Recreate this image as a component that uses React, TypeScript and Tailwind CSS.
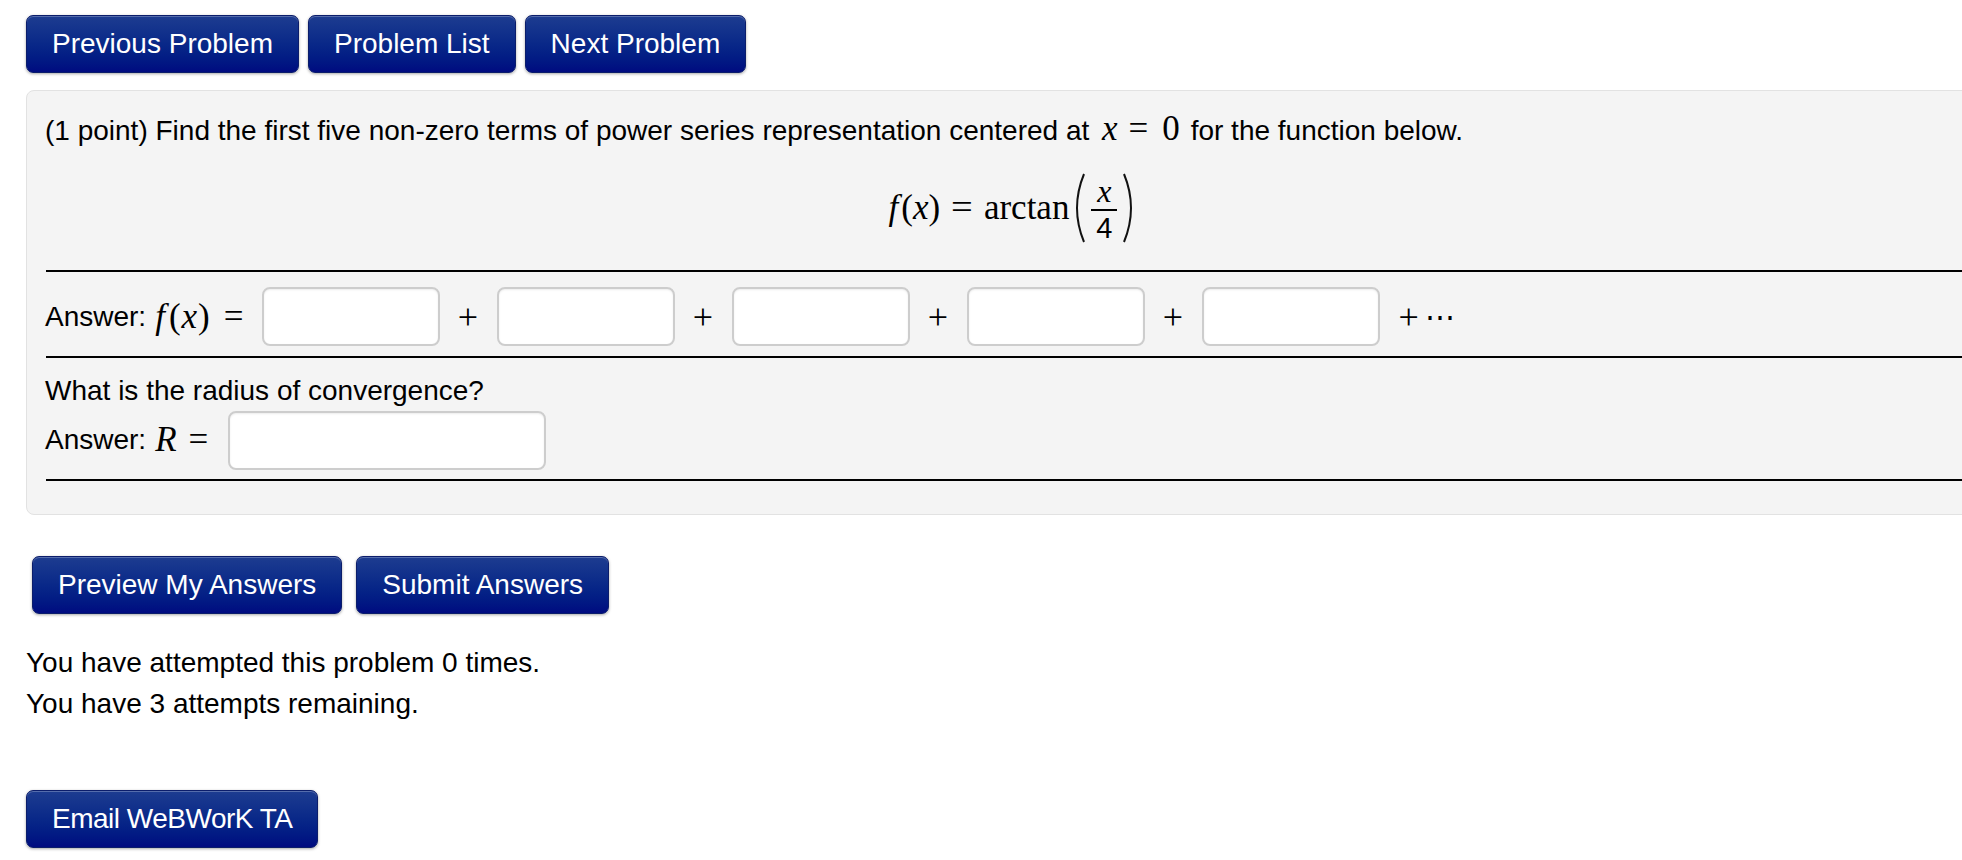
import React from 'react';

const btn =
  'h-[58px] px-[25px] rounded-[7px] border border-[#0b1d6b] bg-linear-to-b from-[#1d3c90] to-[#000a80] text-white text-[28px] leading-[40px] shadow-[inset_0_1px_0_rgba(255,255,255,0.25),0_1px_3px_rgba(0,0,0,0.35)] whitespace-nowrap';

const input =
  'h-[59px] bg-white border-2 border-[#cdcdcd] rounded-[8px] shadow-[inset_0_1px_2px_rgba(0,0,0,0.08)]';

const serif = "font-['Liberation_Serif',serif]";

function Rule() {
  return <div className="h-[2px] bg-black ml-[1px]" />;
}

function Plus() {
  return <span className={`${serif} w-[57px] text-center text-[36px] leading-none`}>+</span>;
}

function Paren({ right }: { right?: boolean }) {
  return (
    <svg width="17" height="70" viewBox="0 0 17 70" className="shrink-0">
      {right ? (
        <path d="M2 1 Q16 35 2 69" fill="none" stroke="#111" strokeWidth="2" />
      ) : (
        <path d="M15 1 Q1 35 15 69" fill="none" stroke="#111" strokeWidth="2" />
      )}
    </svg>
  );
}

export default function App() {
  return (
    <div className="w-[1962px] h-[860px] overflow-hidden bg-white text-black font-['Liberation_Sans',Arial,sans-serif] text-[28px] leading-[40px]">
      {/* Problem navigation */}
      <div className="flex gap-[9px] pl-[26px] pt-[15px]">
        <button className={btn}>Previous Problem</button>
        <button className={btn}>Problem List</button>
        <button className={btn}>Next Problem</button>
      </div>

      {/* Problem body */}
      <div className="mt-[17px] ml-[26px] w-[1958px] bg-[#f4f4f4] border border-[#e2e2e2] rounded-[8px] pl-[18px] pt-[20px] pb-[33px]">
        <p className="whitespace-nowrap h-[40px]">
          (1 point) Find the first five non-zero terms of power series representation centered at{' '}
          <span className={`${serif} text-[35px] leading-none ml-[5px] mr-[3px]`}>
            <i className="mr-[11px]">x</i>=<span className="ml-[14px]">0</span>
          </span>{' '}
          for the function below.
        </p>

        <div className={`${serif} mt-[22px] h-[70px] flex items-center justify-center text-[35px]`}>
          <i className="mr-[3px]">f</i>
          <span>(</span>
          <i>x</i>
          <span>)</span>
          <span className="mx-[12px] scale-x-110">=</span>
          <span>arctan</span>
          <Paren />
          <span className="flex flex-col items-center w-[36px] mt-[2px]">
            <i className="text-[32px] leading-[28px]">x</i>
            <span className="h-[2px] w-[26px] bg-black my-[4px]" />
            <span className="font-['Liberation_Sans',Arial,sans-serif] text-[29px] leading-[27px]">4</span>
          </span>
          <Paren right />
        </div>

        <div className="mt-[27px]">
          <Rule />
        </div>

        <div className="mt-[15px] flex items-center h-[59px]">
          <span>Answer:</span>
          <span className={`${serif} text-[35px] ml-[9px]`}>
            <i className="mr-[4px]">f</i>(<i className="mx-[1px]">x</i>)<span className="ml-[14px]">=</span>
          </span>
          <span className={`${input} w-[178px] ml-[18px]`} />
          <Plus />
          <span className={`${input} w-[178px]`} />
          <Plus />
          <span className={`${input} w-[178px]`} />
          <Plus />
          <span className={`${input} w-[178px]`} />
          <Plus />
          <span className={`${input} w-[178px]`} />
          <span className={`${serif} text-[36px] leading-none ml-[19px]`}>+</span>
          <span className={`${serif} text-[30px] leading-none ml-[6px]`}>⋯</span>
        </div>

        <div className="mt-[10px]">
          <Rule />
        </div>

        <p className="mt-[13px]">What is the radius of convergence?</p>
        <div className="flex items-center h-[58px]">
          <span>Answer:</span>
          <span className={`${serif} text-[35px] ml-[9px]`}>
            <i>R</i>
            <span className="ml-[12px]">=</span>
          </span>
          <span className={`${input} w-[318px] h-[58px] ml-[20px]`} />
        </div>

        <div className="mt-[10px]">
          <Rule />
        </div>
      </div>

      {/* Submit */}
      <div className="flex gap-[14px] mt-[41px] ml-[32px]">
        <button className={btn}>Preview My Answers</button>
        <button className={btn}>Submit Answers</button>
      </div>

      <div className="mt-[28px] ml-[26px] leading-[41px]">
        <p>You have attempted this problem 0 times.</p>
        <p>You have 3 attempts remaining.</p>
      </div>

      <div className="mt-[66px] ml-[26px]">
        <button className={`${btn} tracking-[-0.5px]`}>Email WeBWorK TA</button>
      </div>
    </div>
  );
}
